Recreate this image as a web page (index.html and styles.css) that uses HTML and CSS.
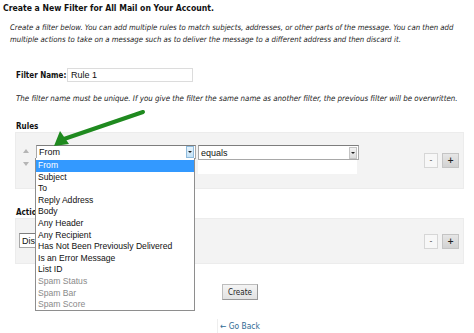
FILE: index.html
```html
<!DOCTYPE html>
<html lang="en">

<head>
    <meta charset="UTF-8">
    <meta name="viewport" content="width=device-width, initial-scale=1.0">
    <title>Create a New Filter</title>
    <link rel="stylesheet" href="styles.css">
</head>

<body>
    <h1 class="page-title">Create a New Filter for All Mail on Your Account.</h1>
    <p class="intro">Create a filter below. You can add multiple rules to match subjects, addresses, or other parts of the message. You can then add<br>multiple actions to take on a message such as to deliver the message to a different address and then discard it.</p>

    <div class="name-row">
        <label class="name-label" for="filterName">Filter Name:</label>
        <input class="name-input" id="filterName" type="text" value="Rule 1">
    </div>
    <p class="note">The filter name must be unique. If you give the filter the same name as another filter, the previous filter will be overwritten.</p>

    <h2 class="section-label">Rules</h2>
    <div class="panel rule-panel">
        <div class="move">
            <span class="move-up"></span>
            <span class="move-down"></span>
        </div>
        <div class="fake-select part-select focused">
            <span class="sel-text">From</span>
            <span class="sel-btn"></span>
        </div>
        <div class="match-col">
            <div class="fake-select match-select">
                <span class="sel-text">equals</span>
                <span class="sel-btn"></span>
            </div>
            <div class="value-box"></div>
        </div>
        <div class="row-btns">
            <button class="mini-btn minus">-</button>
            <button class="mini-btn plus">+</button>
        </div>
    </div>

    <h2 class="section-label actions-label">Actions</h2>
    <div class="panel action-panel">
        <div class="fake-select action-select">
            <span class="sel-text">Discard the message</span>
            <span class="sel-btn"></span>
        </div>
        <div class="row-btns">
            <button class="mini-btn minus">-</button>
            <button class="mini-btn plus">+</button>
        </div>
    </div>

    <div class="submit-row">
        <button class="create-btn">Create</button>
    </div>
    <div class="back-row">
        <a class="go-back" href="#">&larr; Go Back</a>
    </div>

    <!-- open dropdown of the first rule select -->
    <ul class="dropdown">
        <li class="active">From</li>
        <li>Subject</li>
        <li>To</li>
        <li>Reply Address</li>
        <li>Body</li>
        <li>Any Header</li>
        <li>Any Recipient</li>
        <li>Has Not Been Previously Delivered</li>
        <li>Is an Error Message</li>
        <li>List ID</li>
        <li class="muted">Spam Status</li>
        <li class="muted">Spam Bar</li>
        <li class="muted">Spam Score</li>
    </ul>

    <!-- green pointer arrow -->
    <svg class="pointer" width="474" height="333" viewBox="0 0 474 333">
        <line x1="143" y1="112" x2="64" y2="139" stroke="#1f8a1f" stroke-width="4" stroke-linecap="round" />
        <polygon points="54,146 60,131 69,144" fill="#1f8a1f" />
    </svg>
</body>

</html>
```

FILE: styles.css
```css
body {
    margin: 0;
    padding: 0;
    background-color: #fff;
    color: #111;
    font-family: 'DejaVu Sans Condensed', 'DejaVu Sans', sans-serif;
    position: relative;
    width: 474px;
    height: 333px;
    overflow: hidden;
}

.page-title {
    margin: 0;
    padding: 3px 0 0 3px;
    font-size: 8.6px;
    line-height: 11px;
    font-weight: bold;
    white-space: nowrap;
}

.intro {
    margin: 8px 0 0 0;
    padding-left: 10px;
    font-size: 7.73px;
    line-height: 12px;
    font-style: italic;
    color: #222;
    white-space: nowrap;
}

.name-row {
    display: flex;
    align-items: center;
    margin-top: 22px;
    padding-left: 16px;
}

.name-label {
    font-weight: bold;
    font-size: 8px;
    width: 51px;
}

.name-input {
    box-sizing: border-box;
    width: 126px;
    height: 14px;
    margin: 0;
    padding: 0 3px;
    border: 1px solid #dcdcdc;
    font-family: 'Liberation Sans', Arial, sans-serif;
    font-size: 9px;
    color: #111;
}

.note {
    margin: 11px 0 0 0;
    padding-left: 16px;
    font-size: 7.9px;
    line-height: 12px;
    font-style: italic;
    color: #222;
    white-space: nowrap;
}

.section-label {
    margin: 17px 0 0 0;
    padding-left: 16px;
    font-size: 8px;
    line-height: 10px;
    font-weight: bold;
}

.actions-label {
    margin-top: 19px;
}

.panel {
    box-sizing: border-box;
    margin: 0 10px 0 15px;
    background-color: #f3f3f3;
    border: 1px solid #ececec;
    display: flex;
    align-items: flex-start;
}

.rule-panel {
    height: 57px;
    padding: 12px 4px 0 6px;
}

.action-panel {
    height: 46px;
    padding: 14px 4px 0 3px;
}

.move {
    width: 14px;
    display: flex;
    flex-direction: column;
    gap: 9px;
    padding-top: 4px;
}

.move-up,
.move-down {
    width: 0;
    height: 0;
    margin-left: 1px;
    border-left: 3px solid transparent;
    border-right: 3px solid transparent;
}

.move-up {
    border-bottom: 4px solid #b5b5b5;
}

.move-down {
    border-top: 4px solid #b5b5b5;
}

.fake-select {
    box-sizing: border-box;
    display: flex;
    align-items: center;
    background-color: #fff;
    border: 1px solid #a8a8a8;
    border-top-color: #7d7d7d;
    font-family: 'Liberation Sans', Arial, sans-serif;
    font-size: 9px;
    color: #111;
}

.sel-text {
    flex: 1;
    padding-left: 2px;
    white-space: nowrap;
    overflow: hidden;
}

.sel-btn {
    box-sizing: border-box;
    width: 8px;
    height: 12px;
    margin-right: 1px;
    background: linear-gradient(#f2f2f2, #dcdcdc);
    border: 1px solid #c4c4c4;
    position: relative;
}

.sel-btn::after {
    content: '';
    position: absolute;
    left: 1px;
    top: 4px;
    border-left: 2px solid transparent;
    border-right: 2px solid transparent;
    border-top: 2px solid #222;
}

.focused .sel-btn {
    background: linear-gradient(#e6f3fc, #c4e2f7);
    border-color: #8fbbdc;
}

.part-select {
    width: 160px;
    height: 14px;
}

.match-col {
    margin-left: 2px;
    width: 161px;
}

.match-select {
    width: 161px;
    height: 15px;
}

.value-box {
    width: 159px;
    height: 14px;
    background-color: #fff;
}

.row-btns {
    margin-left: auto;
    margin-top: 8px;
    display: flex;
    gap: 4px;
}

.action-panel .row-btns {
    margin-top: 1px;
}

.mini-btn {
    box-sizing: border-box;
    height: 15px;
    margin: 0;
    padding: 0;
    border: 1px solid #d6d6d6;
    font-family: 'DejaVu Sans', sans-serif;
    font-size: 8px;
    line-height: 12px;
    color: #555;
}

.minus {
    width: 14px;
    background-color: #f7f7f7;
}

.plus {
    width: 17px;
    background: linear-gradient(#e6e6e6, #d2d2d2);
    border-color: #c4c4c4;
    color: #222;
    font-weight: bold;
}

.action-select {
    width: 150px;
    height: 15px;
}

.submit-row {
    display: flex;
    margin-top: 20px;
    padding-left: 222px;
}

.create-btn {
    box-sizing: border-box;
    width: 36px;
    height: 16px;
    margin: 0;
    padding: 0;
    background: linear-gradient(#f4f4f4, #e2e2e2);
    border: 1px solid #bdbdbd;
    border-right-color: #999;
    border-bottom-color: #999;
    font-family: 'DejaVu Sans Condensed', sans-serif;
    font-size: 8px;
    color: #222;
}

.back-row {
    display: flex;
    margin-top: 19px;
    padding-left: 217px;
}

.go-back {
    display: block;
    height: 14px;
    line-height: 14px;
    padding: 0 2px;
    font-size: 8.4px;
    color: #2f6a93;
    text-decoration: none;
    border-left: 1px solid #eeeeee;
}

.dropdown {
    position: absolute;
    left: 35px;
    top: 158px;
    box-sizing: border-box;
    width: 160px;
    height: 153px;
    margin: 0;
    padding: 2px 0 0 0;
    list-style: none;
    background-color: #fff;
    border: 1px solid #8e8e8e;
    border-top: none;
    font-family: 'Liberation Sans', Arial, sans-serif;
    font-size: 8.6px;
    color: #111;
}

.dropdown li {
    height: 11.6px;
    line-height: 11.6px;
    padding-left: 2px;
    white-space: nowrap;
}

.dropdown .active {
    background-color: #3399ff;
    color: #fff;
}

.dropdown .muted {
    color: #8a8a8a;
}

.pointer {
    position: absolute;
    left: 0;
    top: 0;
    pointer-events: none;
}
```
